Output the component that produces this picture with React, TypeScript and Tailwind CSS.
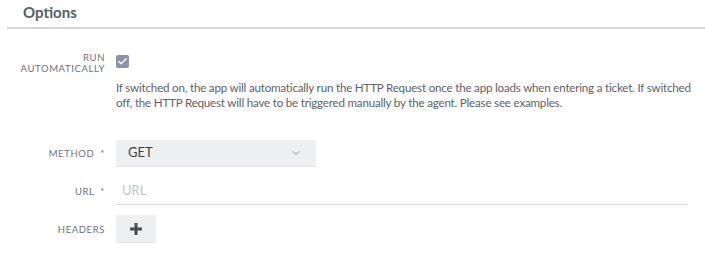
import { Check, ChevronDown } from "lucide-react";

function Label({ children }: { children: React.ReactNode }) {
  return (
    <div className="w-[98px] shrink-0 text-right text-[9.5px] uppercase tracking-[0.6px] leading-[11px] text-[#6d717a]">
      {children}
    </div>
  );
}

export default function App() {
  return (
    <div className="w-[705px] h-[264px] bg-white pl-[7px] font-['Lato','Open_Sans',sans-serif] text-[#55595f]">
      <div className="border-b-2 border-[#d6d8db] h-[29px] pl-[16px] pt-[2px]">
        <h2 className="text-[15px] font-bold leading-[20px] text-[#5a5e65]">Options</h2>
      </div>

      <div className="flex gap-[11px] mt-[23px]">
        <Label>
          Run
          <br />
          Automatically
        </Label>
        <div className="flex-1 pr-[12px]">
          <div className="mt-[3px] w-[13px] h-[13px] rounded-[2px] bg-[#8a91a8] flex items-center justify-center">
            <Check size={11} strokeWidth={3} className="text-white" />
          </div>
          <p className="mt-[12px] text-[11.6px] leading-[15px] tracking-[-0.2px] text-[#5d6168]">
            If switched on, the app will automatically run the HTTP Request once the app loads when entering a ticket. If
            switched off, the HTTP Request will have to be triggered manually by the agent. Please see examples.
          </p>
        </div>
      </div>

      <div className="flex items-center gap-[11px] mt-[30px]">
        <Label>Method&nbsp;&nbsp;*</Label>
        <div className="w-[200px] h-[27px] bg-[#eeeff1] border-b border-[#e2e3e6] rounded-[2px] flex items-center justify-between pl-[12px] pr-[14px]">
          <span className="text-[13px] text-[#3c3f44]">GET</span>
          <ChevronDown size={12} strokeWidth={1.6} className="text-[#6b6f78]" />
        </div>
      </div>

      <div className="flex items-center gap-[11px] mt-[10px]">
        <Label>Url&nbsp;&nbsp;*</Label>
        <div className="w-[572px] h-[28px] border-b border-[#d9dadd] flex items-center pl-[6px]">
          <span className="text-[13px] text-[#c3c5c9]">URL</span>
        </div>
      </div>

      <div className="flex items-center gap-[11px] mt-[10px]">
        <Label>Headers</Label>
        <button className="w-[40px] h-[28px] bg-[#eeeff1] border-b border-[#e2e3e6] rounded-[2px] flex items-center justify-center">
          <svg width="12" height="12" viewBox="0 0 12 12">
            <rect x="4.5" y="0" width="3" height="12" fill="#4a4b50" />
            <rect x="0" y="4.5" width="12" height="3" fill="#4a4b50" />
          </svg>
        </button>
      </div>
    </div>
  );
}
